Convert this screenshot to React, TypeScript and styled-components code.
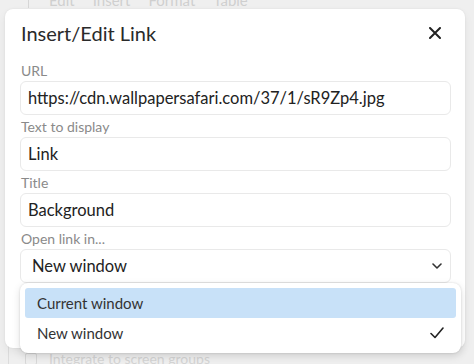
import React from 'react';
import styled, { createGlobalStyle } from 'styled-components';

const GlobalStyle = createGlobalStyle`
  html, body {
    margin: 0;
    padding: 0;
    background: #efefef;
  }
  * {
    box-sizing: border-box;
  }
`;

const Page = styled.div`
  position: relative;
  width: 474px;
  height: 364px;
  overflow: hidden;
  background: #efefef;
  font-family: Lato, 'Noto Sans', sans-serif;
`;

// faded editor behind the dialog
const Menubar = styled.div`
  display: flex;
  align-items: flex-end;
  gap: 18px;
  height: 8px;
  padding-left: 20px;
  border-left: 1px solid #d6d6d6;
  margin-left: 28px;
  font-size: 15px;
  line-height: 12px;
  color: #cfcfcf;
  overflow: hidden;

  span {
    transform: translateY(-2px);
  }
`;

const EditorBody = styled.div`
  margin: 336px 0 0 8px;
  border-left: 1px solid #dcdcdc;
  padding: 6px 0 0 16px;
  display: flex;
  align-items: center;
  gap: 12px;
  font-size: 14px;
  color: #d4d4d4;
`;

const FakeCheck = styled.div`
  width: 12px;
  height: 12px;
  border: 1px solid #d8d8d8;
  border-radius: 2px;
`;

const Dialog = styled.div`
  position: absolute;
  left: 5px;
  top: 9px;
  width: 460px;
  height: 339px;
  background: #fff;
  border-radius: 8px;
  box-shadow: 0 0 2px rgba(0, 0, 0, 0.08), 0 4px 10px rgba(0, 0, 0, 0.06);
`;

const Header = styled.div`
  display: flex;
  align-items: center;
  justify-content: space-between;
  height: 50px;
  padding: 0 24px 2px 16px;
`;

const Title = styled.h1`
  margin: 0;
  font-size: 20px;
  font-weight: 400;
  color: #2a2a2a;
`;

const CloseButton = styled.button`
  display: flex;
  border: none;
  background: none;
  padding: 0;
  color: #222;
  cursor: pointer;
`;

const Body = styled.div`
  padding: 0 14px 0 15px;
`;

const Field = styled.div`
  display: flex;
  flex-direction: column;
`;

const Label = styled.label`
  height: 22px;
  padding: 2px 0 0 1px;
  font-size: 14px;
  line-height: 20px;
  color: #8a8a8a;
`;

const Input = styled.div<{ $inset?: number }>`
  display: flex;
  align-items: center;
  justify-content: space-between;
  height: 34px;
  padding: 0 8px 0 ${(p) => p.$inset ?? 7}px;
  border: 1px solid #e9e9e9;
  border-radius: 6px;
  font-size: 16.5px;
  color: #222;
  white-space: nowrap;
`;

const SelectWrap = styled.div`
  position: relative;
`;

const Menu = styled.div`
  position: absolute;
  left: 0;
  top: 34px;
  width: 441px;
  padding: 5px;
  background: #fff;
  border-radius: 8px;
  box-shadow: 0 0 2px rgba(0, 0, 0, 0.15), 0 3px 8px rgba(0, 0, 0, 0.12);
`;

const MenuItem = styled.div<{ $active?: boolean }>`
  display: flex;
  align-items: center;
  justify-content: space-between;
  height: 30px;
  padding: 0 12px 0 12px;
  border-radius: 3px;
  background: ${(p) => (p.$active ? '#c8e1f8' : 'transparent')};
  font-size: 15px;
  color: #333;
`;

const fields = [
  { label: 'URL', value: 'https://cdn.wallpapersafari.com/37/1/sR9Zp4.jpg' },
  { label: 'Text to display', value: 'Link' },
  { label: 'Title', value: 'Background' },
];

const Chevron = () => (
  <svg width='10' height='6' viewBox='0 0 10 6' fill='none'>
    <path d='M1 1l4 4 4-4' stroke='#333' strokeWidth='1.6' strokeLinecap='round' strokeLinejoin='round' />
  </svg>
);

const Check = () => (
  <svg width='14' height='12' viewBox='0 0 14 12' fill='none'>
    <path d='M1 6.5l4 4L13 1' stroke='#222' strokeWidth='1.6' strokeLinecap='round' strokeLinejoin='round' />
  </svg>
);

const CloseIcon = () => (
  <svg width='12' height='12' viewBox='0 0 12 12' fill='none'>
    <path d='M1 1l10 10M11 1L1 11' stroke='#222' strokeWidth='2' strokeLinecap='round' />
  </svg>
);

const App = () => {
  return (
    <Page>
      <GlobalStyle />
      <Menubar>
        <span>Edit</span>
        <span>Insert</span>
        <span>Format</span>
        <span>Table</span>
      </Menubar>
      <EditorBody>
        <FakeCheck />
        <span>Integrate to screen groups</span>
      </EditorBody>

      <Dialog>
        <Header>
          <Title>Insert/Edit Link</Title>
          <CloseButton aria-label='Close'>
            <CloseIcon />
          </CloseButton>
        </Header>

        <Body>
          {fields.map((f) => (
            <Field key={f.label}>
              <Label>{f.label}</Label>
              <Input>{f.value}</Input>
            </Field>
          ))}

          <Field>
            <Label>Open link in...</Label>
            <SelectWrap>
              <Input $inset={11}>
                New window
                <Chevron />
              </Input>
              <Menu>
                <MenuItem $active>Current window</MenuItem>
                <MenuItem>
                  New window
                  <Check />
                </MenuItem>
              </Menu>
            </SelectWrap>
          </Field>
        </Body>
      </Dialog>
    </Page>
  );
};

export default App;
